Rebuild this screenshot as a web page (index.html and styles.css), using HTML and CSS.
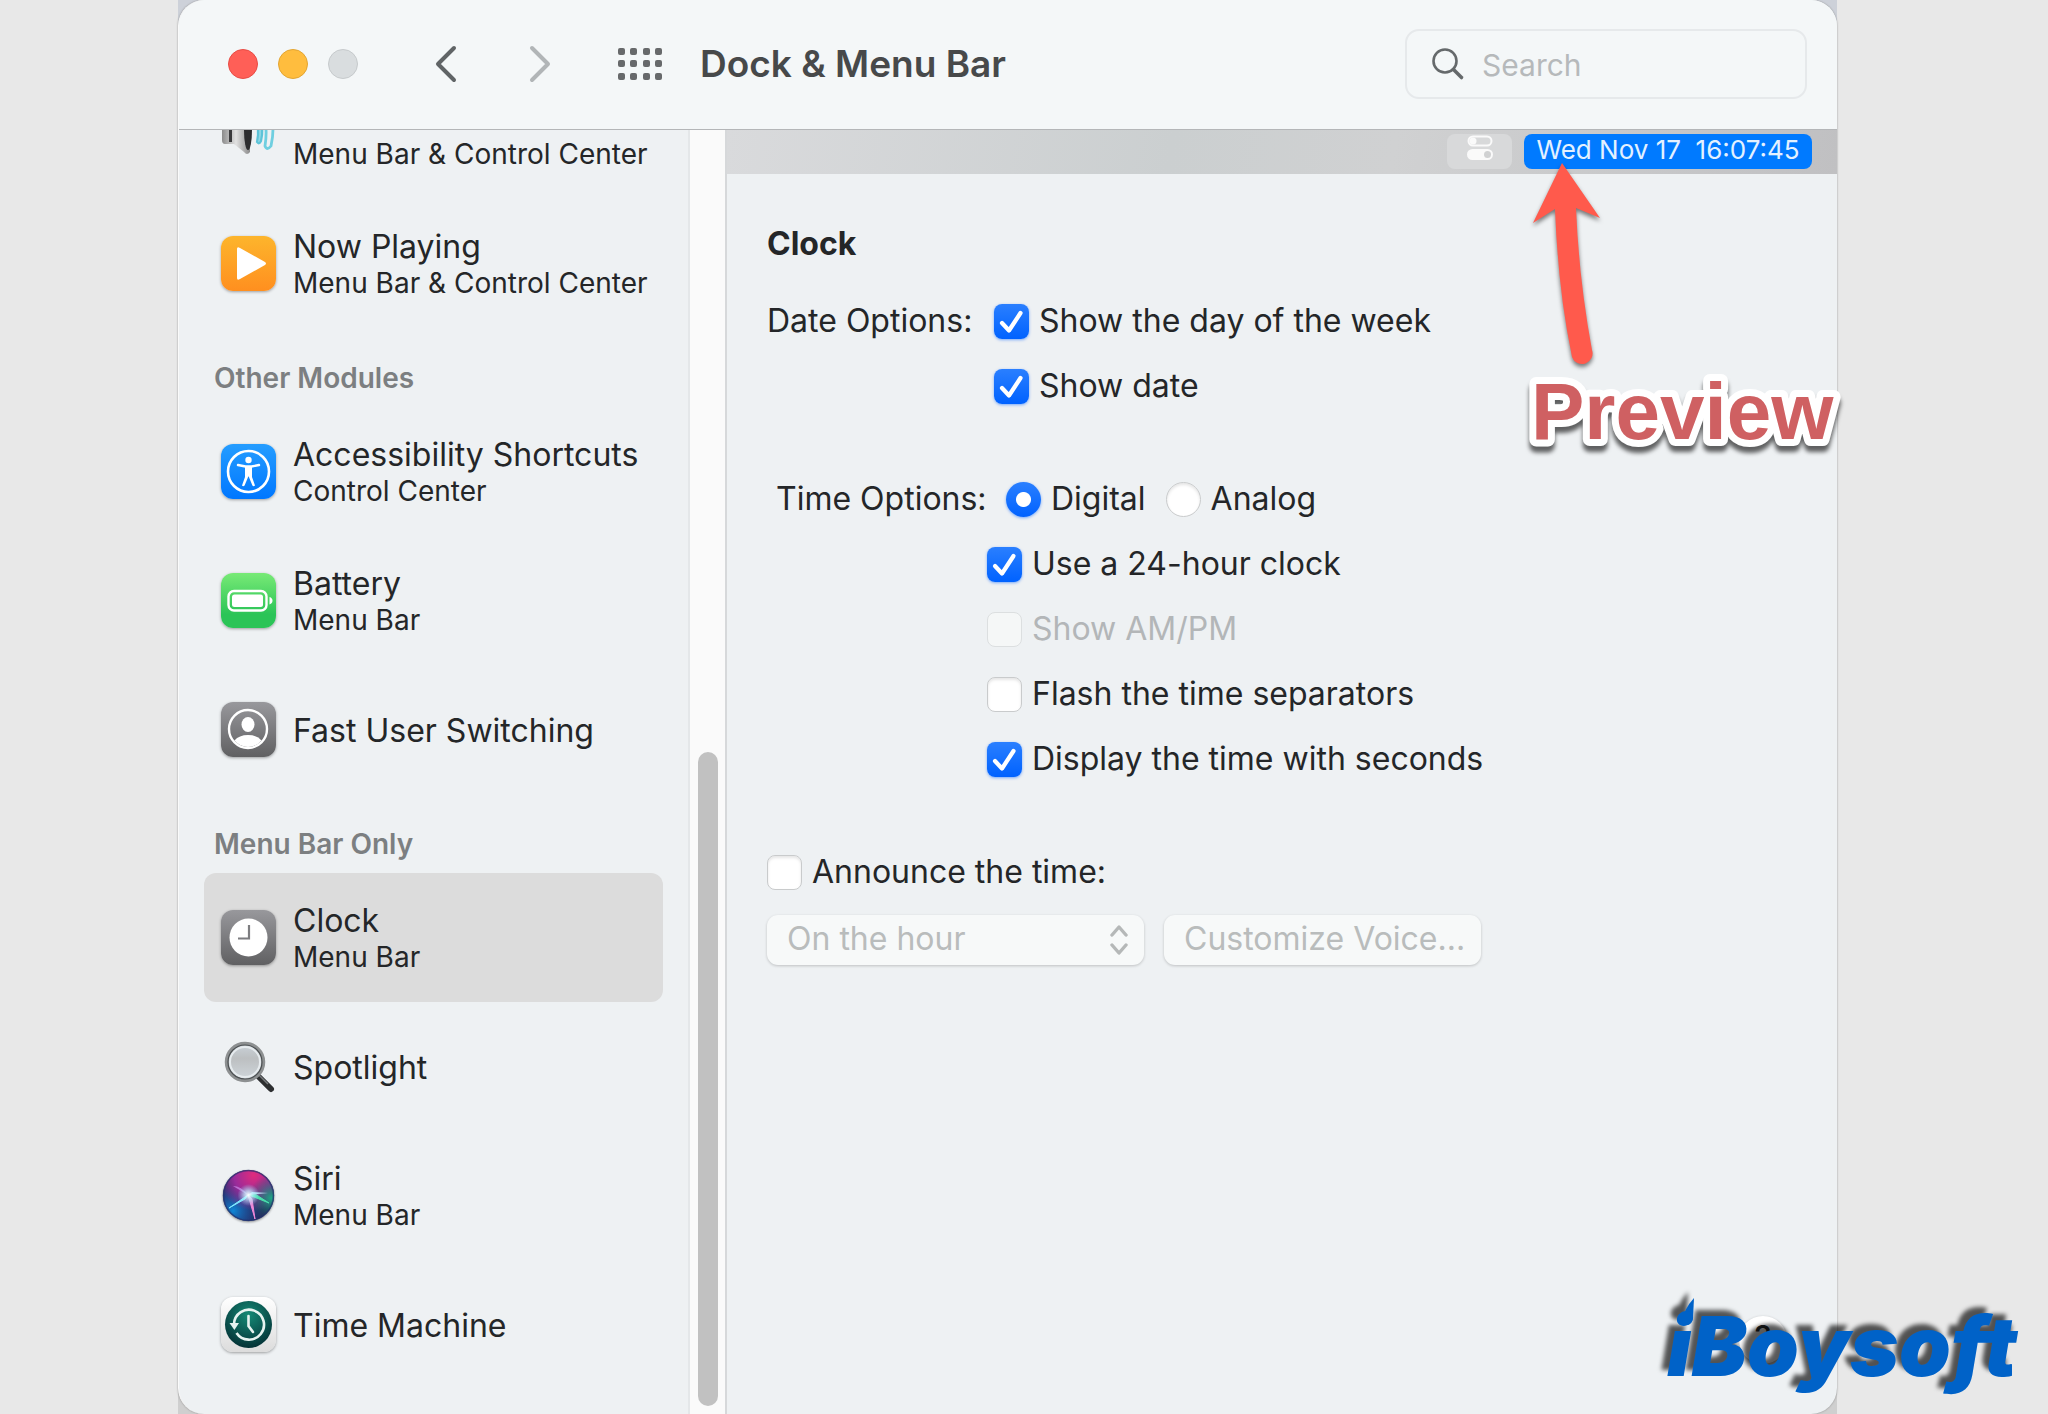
FILE: index.html
```html
<!DOCTYPE html>
<html lang="en">
<head>
  <meta charset="UTF-8" />
  <meta name="viewport" content="width=device-width, initial-scale=1.0" />
  <title>Dock &amp; Menu Bar</title>
  <link rel="stylesheet" href="styles.css">
</head>
<body>
  <div class="desktop">
    <div class="window">
      <header class="toolbar">
        <div class="lights">
          <button class="light red" aria-label="Close"></button>
          <button class="light yellow" aria-label="Minimize"></button>
          <button class="light gray" aria-label="Zoom" disabled></button>
        </div>
        <div class="nav">
          <button class="icon-btn" aria-label="Back">
            <svg width="24" height="38" viewBox="0 0 24 38"><path d="M20 3 4 19l16 16" fill="none" stroke="#606466" stroke-width="4" stroke-linecap="round" stroke-linejoin="round"/></svg>
          </button>
          <button class="icon-btn" aria-label="Forward" disabled>
            <svg width="24" height="38" viewBox="0 0 24 38"><path d="m4 3 16 16L4 35" fill="none" stroke="#b1b5b7" stroke-width="4" stroke-linecap="round" stroke-linejoin="round"/></svg>
          </button>
        </div>
        <button class="icon-btn" aria-label="Show all">
          <svg width="44" height="32" viewBox="0 0 44 32" fill="#67696b">
            <rect x="0" y="0" width="7" height="7" rx="2"/><rect x="12" y="0" width="7" height="7" rx="2"/><rect x="25" y="0" width="7" height="7" rx="2"/><rect x="37" y="0" width="7" height="7" rx="2"/>
            <rect x="0" y="12" width="7" height="7" rx="2"/><rect x="12" y="12" width="7" height="7" rx="2"/><rect x="25" y="12" width="7" height="7" rx="2"/><rect x="37" y="12" width="7" height="7" rx="2"/>
            <rect x="0" y="25" width="7" height="7" rx="2"/><rect x="12" y="25" width="7" height="7" rx="2"/><rect x="25" y="25" width="7" height="7" rx="2"/><rect x="37" y="25" width="7" height="7" rx="2"/>
          </svg>
        </button>
        <h1>Dock &amp; Menu Bar</h1>
        <label class="search">
          <svg width="34" height="34" viewBox="0 0 34 34" fill="none" stroke="#65696b" stroke-linecap="round"><circle cx="14" cy="14" r="11.5" stroke-width="2.6"/><path d="m22.5 22.5 8 8" stroke-width="3.6"/></svg>
          <input type="search" placeholder="Search" aria-label="Search" />
        </label>
      </header>

      <div class="content">
        <nav class="sidebar">
          <a class="item" href="#">
            <svg width="55" height="55" viewBox="0 0 55 55">
              <defs><linearGradient id="cone" x1="0" x2="1"><stop offset="0" stop-color="#8b8b8b"/><stop offset=".5" stop-color="#e2e2e2"/><stop offset="1" stop-color="#8a8a8a"/></linearGradient></defs>
              <path d="M1 12h11L24 2h5v43q-3 4-6 0L13 37H4q-3 0-3-4z" fill="url(#cone)"/>
              <path d="M8 13h3v22H8z" fill="#3a3a3c"/>
              <ellipse cx="27" cy="23" rx="4" ry="20" fill="#2c2c2e"/>
              <path d="M34 10q5 10 2 25 2 3 4-1 3-12-1-23" fill="#8fd6e4" stroke="#5cc3d8" stroke-width="2.200"/>
              <path d="M42 6q5 14 2 33 2 5 6 0 4-18 0-32" fill="none" stroke="#6fcfe0" stroke-width="2.800"/>
            </svg>
            <span class="text"><span class="name">Sound</span><span class="sub">Menu Bar &amp; Control Center</span></span>
          </a>
          <a class="item" href="#">
            <span class="tile orange">
              <svg width="55" height="55" viewBox="0 0 55 55"><path d="M16 13v29q0 3 3 1l25-14q2-1.500 0-3L19 12q-3-2-3 1z" fill="#fff"/></svg>
            </span>
            <span class="text"><span class="name">Now Playing</span><span class="sub">Menu Bar &amp; Control Center</span></span>
          </a>

          <h2>Other Modules</h2>
          <a class="item" href="#">
            <span class="tile blue">
              <svg width="55" height="55" viewBox="0 0 55 55"><circle cx="27.500" cy="27.500" r="20.500" fill="none" stroke="#fff" stroke-width="2.600"/><circle cx="27.500" cy="16" r="3.200" fill="#fff"/><path d="m17 21 7.500 1.500h6L38 21M27.500 23v8" fill="none" stroke="#fff" stroke-width="2.400" stroke-linecap="round"/><path d="M24 22h7v11l3 8.500q-1.500 1.500-2.600 0L27.500 32l-3.900 9.500q-1.500 1.500-2.600 0L24 33z" fill="#fff"/></svg>
            </span>
            <span class="text"><span class="name">Accessibility Shortcuts</span><span class="sub">Control Center</span></span>
          </a>
          <a class="item" href="#">
            <span class="tile green">
              <svg width="55" height="55" viewBox="0 0 55 55"><rect x="7.500" y="18" width="38" height="19.500" rx="5.500" fill="none" stroke="#fff" stroke-width="2.400"/><rect x="11" y="21.500" width="31" height="12.500" rx="2.500" fill="#fff"/><path d="M48.500 24q3 1 3 3.700t-3 3.700z" fill="#fff"/></svg>
            </span>
            <span class="text"><span class="name">Battery</span><span class="sub">Menu Bar</span></span>
          </a>
          <a class="item" href="#">
            <span class="tile dark">
              <svg width="55" height="55" viewBox="0 0 55 55"><circle cx="27" cy="27" r="19" fill="none" stroke="#fff" stroke-width="2.400"/><ellipse cx="27" cy="22.500" rx="6.500" ry="7.500" fill="#fff"/><path d="M13.500 38.500Q18 33 27 33t13.500 5.500Q35 45 27 45t-13.500-6.500z" fill="#fff"/></svg>
            </span>
            <span class="text"><span class="name">Fast User Switching</span></span>
          </a>

          <h2>Menu Bar Only</h2>
          <a class="item selected" href="#">
            <span class="tile dark">
              <svg width="55" height="55" viewBox="0 0 55 55"><circle cx="27.500" cy="27.500" r="19" fill="#fff"/><path d="M28 15v13.500H17" fill="none" stroke="#7d7d80" stroke-width="2.200"/></svg>
            </span>
            <span class="text"><span class="name">Clock</span><span class="sub">Menu Bar</span></span>
          </a>
          <a class="item" href="#">
            <svg width="55" height="55" viewBox="0 0 55 55">
              <defs><linearGradient id="lens" x1="0" y1="0" x2="0" y2="1"><stop offset="0" stop-color="#cbd3da"/><stop offset=".4" stop-color="#bcbfc1"/><stop offset="1" stop-color="#d0d7dc"/></linearGradient></defs>
              <path d="m38 38 12 12" stroke="#2d2f30" stroke-width="6" stroke-linecap="round"/>
              <path d="m37 35 10 10" stroke="#777a7c" stroke-width="1.500"/>
              <circle cx="24" cy="23" r="18.500" fill="url(#lens)" stroke="#8d9091" stroke-width="3.500"/>
              <circle cx="24" cy="23" r="17" fill="none" stroke="#4c5052" stroke-width="1.200"/>
              <circle cx="24" cy="23" r="15" fill="none" stroke="#e6ebee" stroke-width="2"/>
            </svg>
            <span class="text"><span class="name">Spotlight</span></span>
          </a>
          <a class="item" href="#">
            <svg class="siri" width="55" height="55" viewBox="0 0 55 55">
              <defs>
                <radialGradient id="s1" cx=".6" cy=".1" r=".7"><stop offset="0" stop-color="#e02b7d"/><stop offset=".55" stop-color="#982b9a"/><stop offset="1" stop-color="#a02b9a" stop-opacity="0"/></radialGradient>
                <radialGradient id="s2" cx=".2" cy=".8" r=".6"><stop offset="0" stop-color="#1087d6"/><stop offset="1" stop-color="#1b3f9a" stop-opacity="0"/></radialGradient>
                <radialGradient id="s3" cx=".95" cy=".55" r=".45"><stop offset="0" stop-color="#1fa886"/><stop offset="1" stop-color="#125c66" stop-opacity="0"/></radialGradient>
                <radialGradient id="s4"><stop offset="0" stop-color="#fff"/><stop offset=".4" stop-color="#bff4ff" stop-opacity=".7"/><stop offset="1" stop-color="#8fe6ff" stop-opacity="0"/></radialGradient>
              </defs>
              <circle cx="27.500" cy="27.500" r="25.500" fill="#272a5c"/>
              <circle cx="27.500" cy="27.500" r="25.500" fill="url(#s2)"/>
              <circle cx="27.500" cy="27.500" r="25.500" fill="url(#s1)"/>
              <circle cx="27.500" cy="27.500" r="25.500" fill="url(#s3)"/>
              <path d="M27 27 8 40l16-9z" fill="#7fe9ff" stroke="#7fe9ff"/>
              <path d="m27 27 7 24-3-20z" fill="#f088d8" stroke="#f088d8"/>
              <path d="m28 27 20 8-14-9z" fill="#49e0ac" stroke="#49e0ac"/>
              <path d="m27 27 20-2-16-1z" fill="#b8d8f0"/>
              <path d="m27 27-15-9q8 0 15 9l4-13z" fill="#c77fe0" opacity=".8"/>
              <circle cx="27.500" cy="27" r="11" fill="url(#s4)"/>
              <circle cx="27.500" cy="27.500" r="25" fill="none" stroke="#24306e" stroke-width="1.500" opacity=".7"/>
            </svg>
            <span class="text"><span class="name">Siri</span><span class="sub">Menu Bar</span></span>
          </a>
          <a class="item" href="#">
            <span class="tile white">
              <svg width="55" height="55" viewBox="0 0 55 55">
                <defs><radialGradient id="tm" cx=".5" cy=".3" r=".7"><stop offset="0" stop-color="#158a76"/><stop offset="1" stop-color="#043236"/></radialGradient></defs>
                <circle cx="27.500" cy="27.500" r="23.500" fill="url(#tm)"/>
                <path d="M13 27a15 15 0 1 1 2.500 9" fill="none" stroke="#e6f3f0" stroke-width="2.600"/>
                <path d="M8.500 26h9.500l-4.600 7z" fill="#e6f3f0"/>
                <path d="M27.500 19v10l4.500 6" fill="none" stroke="#e6f3f0" stroke-width="2.600" stroke-linecap="round"/>
              </svg>
            </span>
            <span class="text"><span class="name">Time Machine</span></span>
          </a>
        </nav>
        <div class="track"><div class="thumb"></div></div>

        <main>
          <div class="menubar">
            <span class="cc">
              <svg width="26" height="26" viewBox="0 0 26 26"><rect x="1.500" y="1.500" width="23" height="9" rx="4.500" fill="none" stroke="#fafafa" stroke-width="2"/><circle cx="6" cy="6" r="3.500" fill="#fafafa"/><rect x="0" y="14" width="26" height="11" rx="5.500" fill="#fafafa"/><circle cx="20.500" cy="19.500" r="3.500" fill="#d0d1d2"/></svg>
            </span>
            <span class="time">Wed Nov 17&nbsp; 16:07:45</span>
          </div>

          <form class="pane">
            <h3>Clock</h3>
            <div class="group">
              <span class="label">Date Options:</span>
              <div class="options">
                <label class="option"><input type="checkbox" checked />Show the day of the week</label>
                <label class="option"><input type="checkbox" checked />Show date</label>
              </div>
            </div>
            <div class="group time-group">
              <span class="label">Time Options:</span>
              <label class="option"><input type="radio" name="style" checked />Digital</label>
              <label class="option"><input type="radio" name="style" />Analog</label>
            </div>
            <div class="options indent">
              <label class="option"><input type="checkbox" checked />Use a 24-hour clock</label>
              <label class="option off"><input type="checkbox" disabled />Show AM/PM</label>
              <label class="option"><input type="checkbox" />Flash the time separators</label>
              <label class="option"><input type="checkbox" checked />Display the time with seconds</label>
            </div>
            <div class="announce">
              <label class="option"><input type="checkbox" />Announce the time:</label>
              <div class="buttons">
                <div class="select">
                  <select aria-label="Announce the time" disabled><option>On the hour</option></select>
                  <svg width="20" height="30" viewBox="0 0 20 30" fill="none" stroke="#b5b8b8" stroke-width="3.400" stroke-linecap="round" stroke-linejoin="round"><path d="m3 10 7-8 7 8M3 20l7 8 7-8"/></svg>
                </div>
                <button type="button" disabled>Customize Voice...</button>
              </div>
            </div>
            <button type="button" class="help" aria-label="Help">?</button>
          </form>
        </main>
      </div>

      <svg class="callout" width="330" height="320" viewBox="0 0 330 320">
        <path class="arrow" d="M62 3 100 58 76 48Q79 120 92 190A10 10 0 0 1 72 197Q58 130 55 49L33 63Z"/>
        <text class="callout-text" x="31" y="279">Preview</text>
      </svg>
    </div>

    <svg class="logo" width="400" height="134" viewBox="0 0 400 134">
      <g class="logo-art">
        <path d="M54 18q-11 12-11 23 0 4 4 4 5 0 6-7z"/>
        <text x="27" y="96">iBoysoft</text>
      </g>
    </svg>
  </div>
</body>
</html>
```
FILE: styles.css
```css
* {
  box-sizing: border-box;
}
body {
  margin: 0;
  font-family: Inter, "Liberation Sans", sans-serif;
  font-size: 32px;
  line-height: 36px;
  color: #242628;
  background-color: #e8e8e8;
}
h1, h2, h3 {
  margin: 0;
}
button, input, select {
  font: inherit;
  color: inherit;
  margin: 0;
}
.desktop {
  position: relative;
  min-height: 100vh;
  padding: 0 211px 0 178px;
  overflow: hidden;
}
.window {
  position: relative;
  min-height: 100vh;
  display: flex;
  flex-direction: column;
  background-color: #eef1f3;
  border-left: 1px solid #fafafa;
  border-radius: 26px;
  box-shadow: 0 0 2px #888;
}
/* wallpaper showing behind the rounded corners */
.desktop::before {
  content: "";
  position: absolute;
  inset: 0 211px 0 178px;
  background: linear-gradient(#cdd1d9, #cfcfcf);
}

/* toolbar */
.toolbar {
  display: flex;
  align-items: center;
  height: 130px;
  padding: 0 30px 2px 49px;
  background-color: #f4f7f8;
  border-bottom: 1px solid #b4b6b8;
  border-radius: 26px 26px 0 0;
  position: relative;
  z-index: 1;
}
.lights {
  display: flex;
  gap: 20px;
}
.light {
  width: 30px;
  height: 30px;
  padding: 0;
  border-radius: 50%;
  border: 1px solid;
}
.red {
  background-color: #ff5f57;
  border-color: #e84c45;
}
.yellow {
  background-color: #ffbd3e;
  border-color: #e3a532;
}
.gray {
  background-color: #d9dddf;
  border-color: #c6cacc;
}
.nav {
  display: flex;
  gap: 70px;
  margin: 0 66px 0 76px;
}
.icon-btn {
  display: flex;
  padding: 0;
  border: none;
  background: none;
}
h1 {
  margin-left: 38px;
  font-size: 37px;
  line-height: 44px;
  font-weight: 600;
  color: #47494a;
}
.search {
  display: flex;
  align-items: center;
  gap: 17px;
  width: 402px;
  height: 70px;
  margin-left: auto;
  padding: 0 24px;
  border: 2px solid #e6e9eb;
  border-radius: 14px;
  font-size: 30px;
}
.search svg {
  flex-shrink: 0;
}
.search input {
  width: 100%;
  padding: 3px 0 0;
  border: none;
  outline: none;
  background: none;
}
.search input::placeholder {
  color: #b6b9bb;
  opacity: 1;
}

/* sidebar */
.content {
  display: flex;
  flex: 1;
}
.sidebar {
  width: 511px;
  padding: 0 25px;
  border-right: 2px solid #e4e7e9;
  margin-top: -60px;
}
.item {
  display: flex;
  align-items: center;
  gap: 17px;
  height: 129px;
  padding-left: 17px;
  border-radius: 12px;
  color: inherit;
  text-decoration: none;
}
.selected {
  background-color: #dcdcdc;
}
.text {
  display: flex;
  flex-direction: column;
  padding-top: 2px;
}
.name {
  line-height: 38px;
}
.sub {
  font-size: 28px;
  line-height: 35px;
}
h2 {
  height: 79px;
  padding: 33px 0 0 10px;
  font-size: 28px;
  line-height: 34px;
  font-weight: 600;
  color: #7c7f81;
}
.tile {
  width: 55px;
  height: 55px;
  border-radius: 12px;
  box-shadow: 0 1px 3px rgba(0, 0, 0, 0.35);
}
.tile svg {
  display: block;
}
.orange {
  background: linear-gradient(#fdb52c, #ff8f1f);
}
.blue {
  background: linear-gradient(#259dff, #0077ff);
}
.green {
  background: linear-gradient(#78ea76, #2bc457 75%);
}
.dark {
  background: linear-gradient(#98989c, #606062);
}
.white {
  background: linear-gradient(#ffffff, #dcdcdc);
}
.siri {
  filter: drop-shadow(0 1px 1px rgba(0, 0, 0, 0.4));
}
.track {
  display: flex;
  width: 37px;
  padding: 622px 7px 8px 8px;
  background-color: #fafafa;
  border-right: 2px solid #d6d8da;
}
.thumb {
  flex: 1;
  border-radius: 10px;
  background-color: #c1c1c1;
}

/* clock pane */
main {
  flex: 1;
  display: flex;
  flex-direction: column;
}
.menubar {
  display: flex;
  justify-content: flex-end;
  align-items: center;
  gap: 12px;
  height: 44px;
  padding: 0 25px 1px 0;
  background: linear-gradient(100deg, #d9dadc, #cbcfd0 40%, #d0d1d2 60%, #c0c0c2);
}
.cc {
  display: flex;
  justify-content: center;
  width: 65px;
  height: 35px;
  padding-top: 1px;
  border-radius: 8px;
  background-color: #d8d9da;
}
.time {
  width: 288px;
  height: 35px;
  border-radius: 8px;
  background-color: #007aff;
  color: #e3f1ff;
  font-size: 26px;
  line-height: 32px;
  text-align: center;
}
.pane {
  flex: 1;
  display: flex;
  flex-direction: column;
  padding: 52px 50px 50px 40px;
}
h3 {
  font-size: 32px;
  font-weight: 700;
  margin-bottom: 41px;
}
.group {
  display: flex;
  margin-bottom: 77px;
}
.label {
  flex: none;
  width: 227px;
  white-space: nowrap;
}
.time-group {
  gap: 20px;
  margin: 0 0 29px 9px;
}
.time-group .label {
  width: 210px;
}
.options {
  display: flex;
  flex-direction: column;
  gap: 29px;
}
.indent {
  margin: 0 0 77px 220px;
}
.option {
  display: flex;
  align-items: center;
  gap: 10px;
}
.off {
  color: #b3b6b8;
}
.option input {
  appearance: none;
  width: 35px;
  height: 35px;
  border-radius: 8px;
  border: 1px solid #c9cbcc;
  background-color: #ffffff;
  box-shadow: inset 0 2px 3px rgba(0, 0, 0, 0.1);
}
.option input[type="radio"] {
  border-radius: 50%;
}
.option input:disabled {
  background-color: #f5f7f7;
  border-color: #dcdfe0;
  box-shadow: none;
}
.option input:checked {
  border: none;
  background: linear-gradient(#2a7fff, #0062ff);
  box-shadow: 0 1px 3px rgba(0, 98, 255, 0.5);
}
.option input[type="checkbox"]:checked {
  background: url("data:image/svg+xml,%3Csvg xmlns='http://www.w3.org/2000/svg' viewBox='0 0 35 35'%3E%3Cpath d='M8 19l7 7.500L26.500 9' fill='none' stroke='white' stroke-width='4.200' stroke-linecap='round' stroke-linejoin='round'/%3E%3C/svg%3E"), linear-gradient(#2a7fff, #0062ff);
}
.option input[type="radio"]:checked {
  background: radial-gradient(circle, #ffffff 7px, transparent 8px), linear-gradient(#2a7fff, #0062ff);
}
.buttons {
  display: flex;
  gap: 20px;
  margin-top: 25px;
}
.select {
  position: relative;
}
.select svg {
  position: absolute;
  right: 15px;
  top: 10px;
  pointer-events: none;
}
.buttons select,
.buttons button {
  appearance: none;
  height: 50px;
  padding: 0 20px 2px;
  border: none;
  border-radius: 11px;
  background-color: #f7f9f9;
  box-shadow: 0 1px 3px rgba(0, 0, 0, 0.2);
  color: #b9bcbc;
  opacity: 1;
}
.buttons select {
  width: 377px;
}
.buttons button {
  width: 317px;
  white-space: nowrap;
}
.help {
  width: 48px;
  height: 48px;
  margin: auto 0 0 auto;
  padding: 0 0 4px;
  border: none;
  border-radius: 50%;
  background-color: #ffffff;
  box-shadow: 0 1px 3px rgba(0, 0, 0, 0.3);
  font-weight: 500;
}

/* annotation and watermark */
.callout {
  position: absolute;
  top: 160px;
  right: 7px;
  z-index: 2;
  overflow: visible;
}
.arrow {
  fill: #ff5a4c;
  filter: drop-shadow(0 3px 2px rgba(0, 0, 0, 0.5));
}
.callout-text {
  font-family: "Liberation Sans", sans-serif;
  font-size: 80px;
  font-weight: 700;
  fill: #cf6062;
  stroke: #ffffff;
  stroke-width: 14px;
  stroke-linejoin: round;
  paint-order: stroke;
  filter: drop-shadow(0 6px 2px rgba(0, 0, 0, 0.6));
}
.logo {
  position: absolute;
  right: 8px;
  bottom: 0;
}
.logo-art {
  font-family: Inter, sans-serif;
  font-size: 83px;
  font-weight: 900;
  font-style: italic;
  fill: #0062c8;
  filter: drop-shadow(-6px -6px 2px rgba(0, 0, 0, 0.65));
}
```
